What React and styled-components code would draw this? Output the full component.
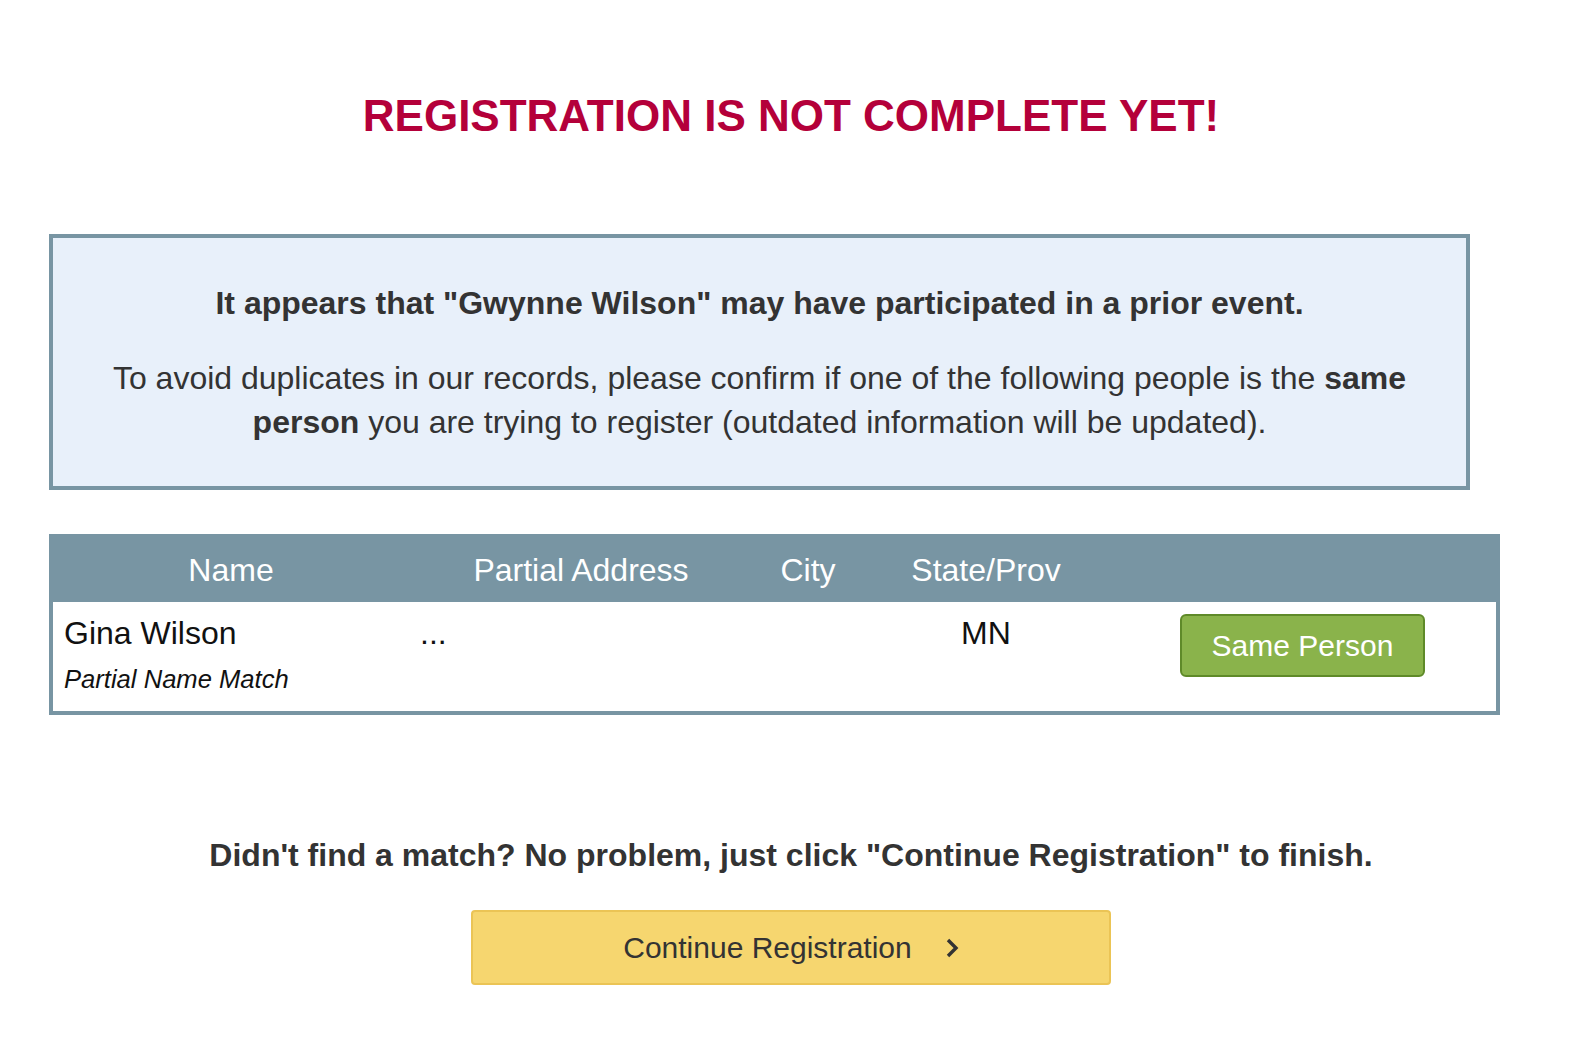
import React from "react";
import styled, { createGlobalStyle } from "styled-components";

const GlobalStyle = createGlobalStyle`
  html, body {
    margin: 0;
    padding: 0;
    background: #ffffff;
    font-family: "Liberation Sans", Arial, Helvetica, sans-serif;
  }
`;

const Page = styled.main`
  width: 1582px;
  padding: 91px 0 60px;
  box-sizing: border-box;
`;

const Title = styled.h1`
  margin: 0 0 93px;
  text-align: center;
  font-size: 44px;
  line-height: 50px;
  font-weight: 700;
  color: #b4003a;
  letter-spacing: 0;
`;

const Section = styled.section`
  margin-left: 49px;
  width: ${(p) => p.$width}px;
  box-sizing: border-box;
`;

const Notice = styled(Section)`
  border: 4px solid #7895a3;
  background: #e8f0fa;
  padding: 43px 40px 42px;
  text-align: center;
  color: #333333;
  font-size: 32px;
  line-height: 44px;
`;

const Lead = styled.p`
  margin: 0 0 31px;
  font-weight: 700;
`;

const Body = styled.p`
  margin: 0;
`;

const Table = styled(Section)`
  margin-top: 44px;
  border: 4px solid #7895a3;
  font-size: 32px;
`;

const Row = styled.div`
  display: grid;
  grid-template-columns: 356px 344px 110px 246px 1fr;
`;

const HeaderRow = styled(Row)`
  background: #7895a3;
  height: 64px;
  align-items: center;
`;

const HeaderCell = styled.div`
  color: #ffffff;
  text-align: center;
  line-height: 37px;
`;

const BodyRow = styled(Row)`
  background: #ffffff;
  padding: 13px 0 17px;
  align-items: start;
`;

const Cell = styled.div`
  color: #111111;
  line-height: 37px;
  padding-left: ${(p) => (p.$center ? 0 : 11)}px;
  text-align: ${(p) => (p.$center ? "center" : "left")};
`;

const Note = styled.div`
  margin-top: 13px;
  font-size: 25.6px;
  line-height: 29px;
  font-style: italic;
`;

const ActionCell = styled.div`
  display: flex;
  justify-content: center;
  margin-top: -1px;
`;

const GreenButton = styled.button`
  height: 63px;
  padding: 0 30px;
  box-sizing: border-box;
  border: 2px solid #5f8a29;
  border-radius: 6px;
  background: #8ab34b;
  color: #ffffff;
  font-family: inherit;
  font-size: 30px;
  cursor: pointer;
`;

const Footer = styled.div`
  margin-top: 118px;
  display: flex;
  flex-direction: column;
  align-items: center;
`;

const FooterText = styled.p`
  margin: 0;
  color: #333333;
  font-size: 32px;
  line-height: 44px;
  font-weight: 700;
  text-align: center;
`;

const ContinueButton = styled.button`
  margin-top: 33px;
  width: 640px;
  height: 75px;
  box-sizing: border-box;
  display: flex;
  align-items: center;
  justify-content: center;
  gap: 33px;
  border: 2px solid #ebc455;
  border-radius: 4px;
  background: #f6d66f;
  color: #333333;
  font-family: inherit;
  font-size: 30px;
  cursor: pointer;
`;

const Chevron = styled.svg`
  width: 14px;
  height: 20px;
`;

export default function App() {
  return (
    <>
      <GlobalStyle />
      <Page>
        <Title>REGISTRATION IS NOT COMPLETE YET!</Title>

        <Notice $width={1421}>
          <Lead>It appears that "Gwynne Wilson" may have participated in a prior event.</Lead>
          <Body>
            To avoid duplicates in our records, please confirm if one of the following people is the{" "}
            <strong>same person</strong> you are trying to register (outdated information will be updated).
          </Body>
        </Notice>

        <Table $width={1451}>
          <HeaderRow>
            <HeaderCell>Name</HeaderCell>
            <HeaderCell>Partial Address</HeaderCell>
            <HeaderCell>City</HeaderCell>
            <HeaderCell>State/Prov</HeaderCell>
            <HeaderCell />
          </HeaderRow>
          <BodyRow>
            <Cell>
              Gina Wilson
              <Note>Partial Name Match</Note>
            </Cell>
            <Cell>...</Cell>
            <Cell></Cell>
            <Cell $center>MN</Cell>
            <ActionCell>
              <GreenButton>Same Person</GreenButton>
            </ActionCell>
          </BodyRow>
        </Table>

        <Footer>
          <FooterText>Didn't find a match? No problem, just click "Continue Registration" to finish.</FooterText>
          <ContinueButton>
            Continue Registration
            <Chevron viewBox="0 0 14 20">
              <polyline points="3,2 11,10 3,18" fill="none" stroke="#333333" strokeWidth="3.4" />
            </Chevron>
          </ContinueButton>
        </Footer>
      </Page>
    </>
  );
}
